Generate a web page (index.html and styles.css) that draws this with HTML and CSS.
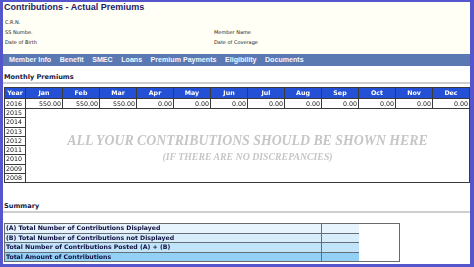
FILE: index.html
```html
<!DOCTYPE html>
<html>
<head>
<meta charset="utf-8">
<link rel="stylesheet" href="styles.css">
</head>
<body>
<div class="frame">
  <div class="head">
    <div class="title">Contributions - Actual Premiums</div>
    <div class="info">
      <div class="lbl">C.R.N.</div><div class="lbl"></div>
      <div class="lbl">SS Numbe.</div><div class="lbl">Member Name</div>
      <div class="lbl">Date of Birth</div><div class="lbl">Date of Coverage</div>
    </div>
  </div>
  <nav class="nav">
    <span>Member Info</span><span>Benefit</span><span>SMEC</span><span>Loans</span><span>Premium Payments</span><span>Eligibility</span><span>Documents</span>
  </nav>
  <div class="sec">Monthly Premiums</div>
  <div class="rule"></div>
  <table class="prem">
    <colgroup><col class="cy"><col class="cm"><col class="cm"><col class="cm"><col class="cm"><col class="cm"><col class="cm"><col class="cm"><col class="cm"><col class="cm"><col class="cm"><col class="cm"><col class="cm"></colgroup>
    <tr class="hd"><th>Year</th><th>Jan</th><th>Feb</th><th>Mar</th><th>Apr</th><th>May</th><th>Jun</th><th>Jul</th><th>Aug</th><th>Sep</th><th>Oct</th><th>Nov</th><th>Dec</th></tr>
    <tr class="dr"><td class="yr">2016</td><td>550.00</td><td>550.00</td><td>550.00</td><td>0.00</td><td>0.00</td><td>0.00</td><td>0.00</td><td>0.00</td><td>0.00</td><td>0.00</td><td>0.00</td><td>0.00</td></tr>
    <tr class="er"><td class="yr">2015</td><td class="wm" colspan="12" rowspan="8"><div class="wm1">ALL YOUR CONTRIBUTIONS SHOULD BE SHOWN HERE</div><div class="wm2">(IF THERE ARE NO DISCREPANCIES)</div></td></tr>
    <tr class="er"><td class="yr">2014</td></tr>
    <tr class="er"><td class="yr">2013</td></tr>
    <tr class="er"><td class="yr">2012</td></tr>
    <tr class="er"><td class="yr">2011</td></tr>
    <tr class="er"><td class="yr">2010</td></tr>
    <tr class="er"><td class="yr">2009</td></tr>
    <tr class="er"><td class="yr">2008</td></tr>
  </table>
  <div class="sec sec2">Summary</div>
  <div class="rule rule2"></div>
  <table class="sum">
    <tr class="s1"><td class="sl">(A) Total Number of Contributions Displayed</td><td class="sv"></td><td class="sx" rowspan="4"></td></tr>
    <tr class="s2"><td class="sl">(B) Total Number of Contributions not Displayed</td><td class="sv"></td></tr>
    <tr class="s3"><td class="sl">Total Number of Contributions Posted (A) + (B)</td><td class="sv"></td></tr>
    <tr class="s4"><td class="sl">Total Amount of Contributions</td><td class="sv"></td></tr>
  </table>
</div>
</body>
</html>
```
FILE: styles.css
```css
html, body { margin: 0; padding: 0; background: #ffffff; }
body { font-family: "DejaVu Sans", Verdana, sans-serif; }
.frame {
  width: 467px;
  height: 262px;
  border-style: solid;
  border-color: #5656cc;
  border-width: 2px 4px 3px 3px;
  overflow: hidden;
  background: #fff;
}
.head { background: #fffff6; height: 52px; }
.title {
  font-family: "Liberation Sans", Arial, sans-serif;
  font-weight: bold;
  font-size: 9px;
  line-height: 11px;
  color: #1c1c6a;
  padding: 0 0 0 1px;
  height: 15px;
}
.info {
  display: grid;
  grid-template-columns: 209px 1fr;
  padding-left: 2px;
}
.lbl { font-size: 5px; height: 10px; line-height: 10px; color: #222; }
.nav {
  height: 12px;
  background: #5a78b2;
  display: flex;
  align-items: center;
  gap: 8.5px;
  padding-left: 6px;
  font-family: "Liberation Sans", Arial, sans-serif;
  font-size: 7.1px;
  font-weight: bold;
  color: #f4f6ff;
}
.sec {
  font-size: 6.6px;
  font-weight: bold;
  color: #1a1a40;
  padding: 6px 0 0 1px;
  height: 10px;
  line-height: 10px;
}
.sec2 { padding-top: 18px; }
.rule { height: 2px; background: #cfcfcf; margin-bottom: 3px; }
.rule2 { margin-bottom: 10px; }
.prem {
  border-collapse: collapse;
  margin-left: 1px;
  table-layout: fixed;
  width: 466px;
  font-size: 6.3px;
  will-change: transform;
}
.cy { width: 21px; }
.cm { width: 37px; }
.prem th, .prem td { border: 1px solid #3a3a3a; padding: 0 1px; white-space: nowrap; }
.hd th { background: #2450d6; color: #fff; font-weight: bold; text-align: center; height: 10px; line-height: 10px; }
.dr td { text-align: right; color: #111; height: 9px; line-height: 9px; }
.dr td.yr, .er td.yr { text-align: left; color: #111; }
.er td.yr { height: 8.25px; line-height: 8px; }
.wm { text-align: center; vertical-align: middle; padding: 0; }
.wm1 {
  font-family: "Liberation Serif", "Times New Roman", serif;
  font-style: italic; font-weight: bold;
  font-size: 13.8px; line-height: 16px;
  color: #c6c6c6;
  margin-top: 4px;
}
.wm2 {
  font-family: "Liberation Serif", "Times New Roman", serif;
  font-style: italic; font-weight: bold;
  font-size: 9.8px; line-height: 12px;
  color: #c6c6c6;
  margin-top: 2px;
}
.sum {
  border-collapse: collapse;
  margin-left: 1px;
  width: 396px;
  table-layout: fixed;
  border: 1.5px solid #6a6a6a;
  font-size: 6.2px;
  font-weight: bold;
  color: #101040;
  will-change: transform;
}
.sum td { height: 8.5px; line-height: 8.5px; padding: 0 1px; }
.sl { width: 314px; border-bottom: 1.5px solid #666e78; border-right: 1.5px solid #666e78; white-space: nowrap; }
.sv { width: 35px; border-bottom: 1.5px solid #666e78; }
.sx { background: #fff; }
.s1 td.sl, .s1 td.sv { background: #e7f3fd; }
.s2 td.sl, .s2 td.sv { background: #d8edfc; }
.s3 td.sl, .s3 td.sv { background: #c1e4fb; }
.s4 td.sl, .s4 td.sv { background: #92d0f5; border-bottom: none; }
```
